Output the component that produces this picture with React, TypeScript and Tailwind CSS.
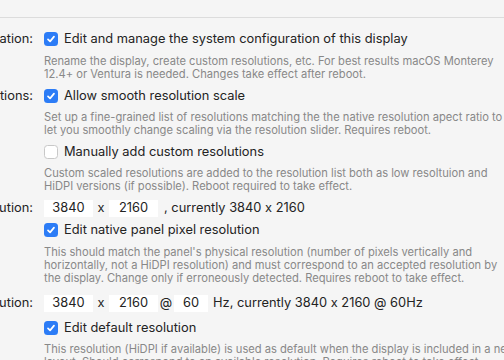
import React from "react";

const font = { fontFamily: "Inter, 'Noto Sans', sans-serif" };

function Check({ on }: { on: boolean }) {
  return on ? (
    <span className="flex h-[14px] w-[14px] shrink-0 items-center justify-center rounded-[3.5px] bg-[#2c7cf6]">
      <svg width="10" height="10" viewBox="0 0 10 10">
        <path d="M2 5.3 L4.1 7.4 L8 2.6" fill="none" stroke="white" strokeWidth="1.7" strokeLinecap="round" strokeLinejoin="round" />
      </svg>
    </span>
  ) : (
    <span className="block h-[14px] w-[14px] shrink-0 rounded-[3.5px] border border-[#c8c8c8] bg-white" />
  );
}

function CheckRow({ on, text }: { on: boolean; text: string }) {
  return (
    <div className="flex h-[20px] items-center gap-[6px] text-[12.85px] text-[#232323]">
      <Check on={on} />
      <span className="whitespace-nowrap">{text}</span>
    </div>
  );
}

function Desc({ lines, className = "" }: { lines: string[]; className?: string }) {
  return (
    <div className={"text-[11.15px] leading-[13px] text-[#888888] " + className}>
      {lines.map((l, i) => (
        <div key={i} className="whitespace-nowrap">
          {l}
        </div>
      ))}
    </div>
  );
}

function Box({ v, w }: { v: string; w: string }) {
  return (
    <span className={"flex h-[17px] items-center justify-center bg-white " + w}>{v}</span>
  );
}

function Label({ text }: { text: string }) {
  return (
    <div className="flex h-[20px] items-center justify-end whitespace-nowrap text-[12.85px] text-[#232323]">
      {text}
    </div>
  );
}

export default function App() {
  return (
    <div
      className="h-[360px] w-[504px] overflow-hidden bg-[#f5f5f5] [font-feature-settings:'calt'_0]"
      style={font}
    >
      <div className="h-[17px]" />
      <div className="h-px bg-[#dcdcdc]" />
      <div className="ml-[-107px] grid grid-cols-[140px_1fr] gap-x-[11px]">
        {/* Row 1 */}
        <div className="mt-[11px]">
          <Label text="Display configuration:" />
        </div>
        <div className="mt-[11px]">
          <CheckRow on text="Edit and manage the system configuration of this display" />
          <Desc
            className="mt-[6px]"
            lines={[
              "Rename the display, create custom resolutions, etc. For best results macOS Monterey",
              "12.4+ or Ventura is needed. Changes take effect after reboot.",
            ]}
          />
        </div>

        {/* Row 2 */}
        <div className="mt-[5px]">
          <Label text="Custom resolutions:" />
        </div>
        <div className="mt-[5px]">
          <CheckRow on text="Allow smooth resolution scale" />
          <Desc
            className="mt-[5px]"
            lines={[
              "Set up a fine-grained list of resolutions matching the the native resolution apect ratio to",
              "let you smoothly change scaling via the resolution slider. Requires reboot.",
            ]}
          />
          <div className="mt-[5px]">
            <CheckRow on={false} text="Manually add custom resolutions" />
          </div>
          <Desc
            className="mt-[5px]"
            lines={[
              "Custom scaled resolutions are added to the resolution list both as low resoltuion and",
              "HiDPI versions (if possible). Reboot required to take effect.",
            ]}
          />
        </div>

        {/* Native resolution */}
        <div className="mt-[5px]">
          <Label text="Native resolution:" />
        </div>
        <div className="mt-[5px]">
          <div className="flex h-[20px] items-center text-[12.85px] text-[#232323]">
            <Box v="3840" w="w-[49px]" />
            <span className="w-[16px] text-center">x</span>
            <Box v="2160" w="w-[49px]" />
            <span className="ml-[6px] whitespace-nowrap">, currently 3840 x 2160</span>
          </div>
          <div className="mt-[2px]">
            <CheckRow on text="Edit native panel pixel resolution" />
          </div>
          <Desc
            className="mt-[6px] leading-[13.5px]"
            lines={[
              "This should match the panel's physical resolution (number of pixels vertically and",
              "horizontally, not a HiDPI resolution) and must correspond to an accepted resolution by",
              "the display. Change only if erroneously detected. Requires reboot to take effect.",
            ]}
          />
        </div>

        {/* Default resolution */}
        <div className="mt-[8px]">
          <Label text="Default resolution:" />
        </div>
        <div className="mt-[8px]">
          <div className="flex h-[20px] items-center text-[12.85px] text-[#232323]">
            <Box v="3840" w="w-[49px]" />
            <span className="w-[16px] text-center">x</span>
            <Box v="2160" w="w-[49px]" />
            <span className="w-[16px] text-center">@</span>
            <Box v="60" w="w-[34px]" />
            <span className="ml-[5px] whitespace-nowrap">Hz, currently 3840 x 2160 @ 60Hz</span>
          </div>
          <div className="mt-[5px]">
            <CheckRow on text="Edit default resolution" />
          </div>
          <Desc
            className="mt-[5px]"
            lines={[
              "This resolution (HiDPI if available) is used as default when the display is included in a new",
              "layout. Should correspond to an available resolution. Requires reboot to take effect.",
            ]}
          />
        </div>
      </div>
    </div>
  );
}
